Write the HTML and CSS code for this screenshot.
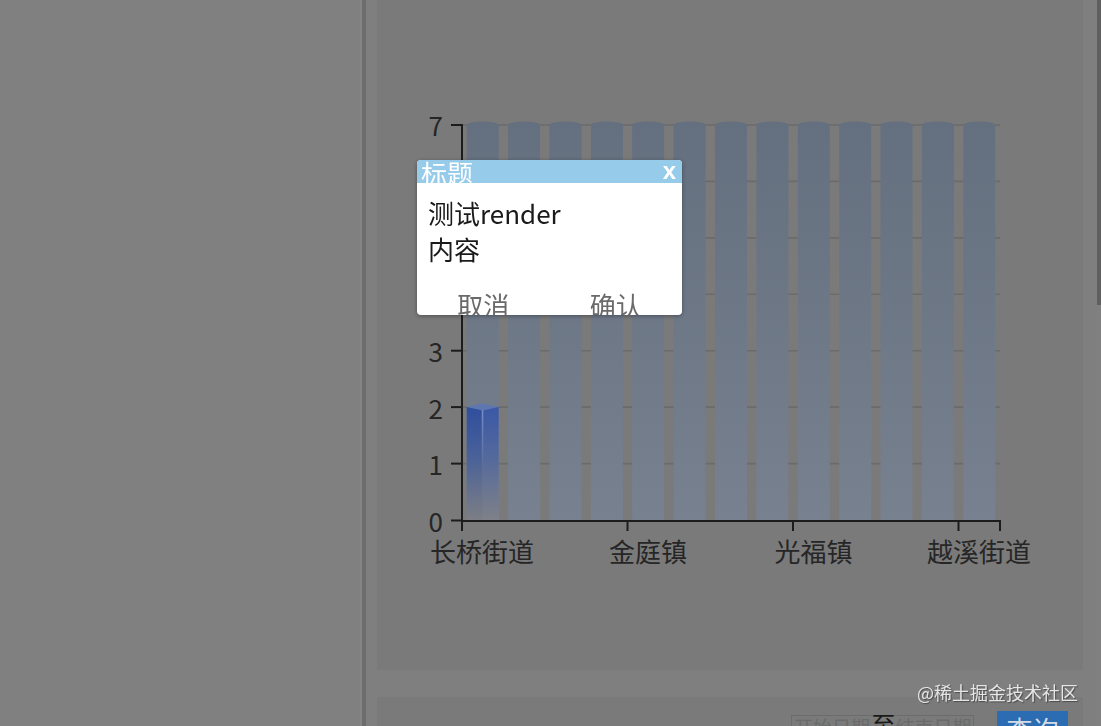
FILE: index.html
```html
<!DOCTYPE html>
<html lang="zh-CN">
<head>
<meta charset="utf-8">
<title>统计</title>
<link rel="stylesheet" href="styles.css">
</head>
<body>
<div class="app">
  <aside class="sidebar"></aside>
  <main class="main">
    <div class="main-content">
      <section class="card chart-card">
        <svg class="chart" width="706" height="670" viewBox="377 0 706 670" xmlns="http://www.w3.org/2000/svg">
          <defs>
            <linearGradient id="bgbar" x1="0" y1="121" x2="0" y2="520" gradientUnits="userSpaceOnUse">
              <stop offset="0" stop-color="#646f7f"/>
              <stop offset="1" stop-color="#77818f"/>
            </linearGradient>
            <linearGradient id="dataL" x1="0" y1="407" x2="0" y2="520" gradientUnits="userSpaceOnUse">
              <stop offset="0" stop-color="#2f4e9d"/>
              <stop offset="0.45" stop-color="#4a6299"/>
              <stop offset="1" stop-color="#7c7e84"/>
            </linearGradient>
            <linearGradient id="dataR" x1="0" y1="407" x2="0" y2="520" gradientUnits="userSpaceOnUse">
              <stop offset="0" stop-color="#3a58a6"/>
              <stop offset="0.45" stop-color="#54699c"/>
              <stop offset="1" stop-color="#7f8188"/>
            </linearGradient>
            <linearGradient id="shine" x1="0" y1="410" x2="0" y2="470" gradientUnits="userSpaceOnUse">
              <stop offset="0" stop-color="#8ea3d6" stop-opacity="0.7"/>
              <stop offset="1" stop-color="#8ea3d6" stop-opacity="0"/>
            </linearGradient>
          </defs>

          <g class="grid">
            <line x1="462" y1="463.6" x2="1000" y2="463.6"/>
            <line x1="462" y1="407.1" x2="1000" y2="407.1"/>
            <line x1="462" y1="350.7" x2="1000" y2="350.7"/>
            <line x1="462" y1="294.3" x2="1000" y2="294.3"/>
            <line x1="462" y1="237.9" x2="1000" y2="237.9"/>
            <line x1="462" y1="181.4" x2="1000" y2="181.4"/>
            <line x1="462" y1="125" x2="1000" y2="125"/>
          </g>

          <g class="bg-bars" fill="url(#bgbar)">
            <rect x="466.7" y="125" width="32" height="395"/><ellipse cx="482.7" cy="125" rx="16" ry="3.5"/>
            <rect x="508.1" y="125" width="32" height="395"/><ellipse cx="524.1" cy="125" rx="16" ry="3.5"/>
            <rect x="549.5" y="125" width="32" height="395"/><ellipse cx="565.5" cy="125" rx="16" ry="3.5"/>
            <rect x="590.9" y="125" width="32" height="395"/><ellipse cx="606.9" cy="125" rx="16" ry="3.5"/>
            <rect x="632.2" y="125" width="32" height="395"/><ellipse cx="648.2" cy="125" rx="16" ry="3.5"/>
            <rect x="673.6" y="125" width="32" height="395"/><ellipse cx="689.6" cy="125" rx="16" ry="3.5"/>
            <rect x="715" y="125" width="32" height="395"/><ellipse cx="731" cy="125" rx="16" ry="3.5"/>
            <rect x="756.4" y="125" width="32" height="395"/><ellipse cx="772.4" cy="125" rx="16" ry="3.5"/>
            <rect x="797.8" y="125" width="32" height="395"/><ellipse cx="813.8" cy="125" rx="16" ry="3.5"/>
            <rect x="839.2" y="125" width="32" height="395"/><ellipse cx="855.2" cy="125" rx="16" ry="3.5"/>
            <rect x="880.5" y="125" width="32" height="395"/><ellipse cx="896.5" cy="125" rx="16" ry="3.5"/>
            <rect x="921.9" y="125" width="32" height="395"/><ellipse cx="937.9" cy="125" rx="16" ry="3.5"/>
            <rect x="963.3" y="125" width="32" height="395"/><ellipse cx="979.3" cy="125" rx="16" ry="3.5"/>
          </g>

          <g class="data-bar">
            <rect x="466.7" y="407" width="16" height="113" fill="url(#dataL)"/>
            <rect x="482.7" y="407" width="16" height="113" fill="url(#dataR)"/>
            <polygon points="466.7,407 482.7,403.5 498.7,407 482.7,410.5" fill="#5f77b1"/>
            <rect x="481.7" y="410" width="1.6" height="60" fill="url(#shine)"/>
          </g>

          <g class="axis">
            <line x1="462" y1="124" x2="462" y2="531"/>
            <line x1="461" y1="521" x2="1001" y2="521"/>
            <line x1="451" y1="125" x2="462" y2="125"/>
            <line x1="451" y1="181.4" x2="462" y2="181.4"/>
            <line x1="451" y1="237.9" x2="462" y2="237.9"/>
            <line x1="451" y1="294.3" x2="462" y2="294.3"/>
            <line x1="451" y1="350.7" x2="462" y2="350.7"/>
            <line x1="451" y1="407.1" x2="462" y2="407.1"/>
            <line x1="451" y1="463.6" x2="462" y2="463.6"/>
            <line x1="451" y1="520.5" x2="462" y2="520.5"/>
            <line x1="627.5" y1="521" x2="627.5" y2="531"/>
            <line x1="793" y1="521" x2="793" y2="531"/>
            <line x1="958.5" y1="521" x2="958.5" y2="531"/>
            <line x1="1000" y1="521" x2="1000" y2="531"/>
          </g>

          <g class="y-labels">
            <text x="443" y="520">0</text>
            <text x="443" y="463.6">1</text>
            <text x="443" y="407.1">2</text>
            <text x="443" y="350.7">3</text>
            <text x="443" y="294.3">4</text>
            <text x="443" y="237.9">5</text>
            <text x="443" y="181.4">6</text>
            <text x="443" y="124">7</text>
          </g>
          <g class="x-labels">
            <text x="482" y="550">长桥街道</text>
            <text x="648" y="550">金庭镇</text>
            <text x="813.5" y="550">光福镇</text>
            <text x="979" y="550">越溪街道</text>
          </g>
        </svg>
      </section>

      <section class="card query-card">
        <div class="range">
          <span class="range-ph">开始日期</span>
          <span class="range-sep">至</span>
          <span class="range-ph">结束日期</span>
        </div>
        <button class="btn-query" type="button">查询</button>
      </section>

      <section class="card list-card"></section>
    </div>
    <div class="scrollbar"><div class="scrollbar-thumb"></div></div>
  </main>
</div>

<div class="modal">
  <div class="modal-header">
    <span class="modal-title">标题</span>
    <span class="modal-close">x</span>
  </div>
  <div class="modal-body">
    <div>测试render</div>
    <div>内容</div>
  </div>
  <div class="modal-footer">
    <button class="modal-btn" type="button">取消</button>
    <button class="modal-btn" type="button">确认</button>
  </div>
</div>

<div class="watermark">@稀土掘金技术社区</div>
</body>
</html>
```

FILE: styles.css
```css
html, body {
  margin: 0;
  padding: 0;
  width: 1101px;
  height: 726px;
  overflow: hidden;
  background: #808080;
  font-family: "Noto Sans CJK SC", "Noto Sans", sans-serif;
}

.app {
  display: flex;
  height: 726px;
}

.sidebar {
  width: 360px;
  flex: none;
  background: #808080;
  border-right: 2px solid #858585;
}

.main {
  flex: 1;
  min-width: 0;
  height: 726px;
  overflow: hidden;
  display: flex;
  background: #7f7f7f;
  border-left: 4px solid #6d6d6d;
}

.main-content {
  flex: 1;
  min-width: 0;
  padding: 0 14px 0 11px;
}

.scrollbar {
  width: 4px;
  flex: none;
  background: #808080;
}

.scrollbar-thumb {
  height: 305px;
  background: #5f5f5f;
}

.card {
  background: #7a7a7a;
}

.chart-card {
  height: 670px;
}

.chart {
  display: block;
}

.grid line {
  stroke: #6b6b6b;
  stroke-width: 1.6;
}

.axis line {
  stroke: #1c1c1c;
  stroke-width: 2;
}

.y-labels text {
  font-family: "Noto Sans CJK SC", "Noto Sans", sans-serif;
  font-size: 26px;
  fill: #262626;
  text-anchor: end;
  dominant-baseline: central;
}

.x-labels text {
  font-family: "Noto Sans CJK SC", "Noto Sans", sans-serif;
  font-size: 26px;
  fill: #262626;
  text-anchor: middle;
  dominant-baseline: central;
}

.query-card {
  margin-top: 27px;
  height: 60px;
  display: flex;
  justify-content: flex-end;
  align-items: flex-start;
  gap: 23px;
  padding: 14px 15px 0 0;
  box-sizing: border-box;
}

.range {
  width: 183px;
  height: 36px;
  box-sizing: border-box;
  border: 1px solid #6c6c6c;
  margin-top: 4px;
  display: flex;
  align-items: flex-start;
  padding-left: 2px;
  line-height: 1;
}

.range-ph {
  font-size: 19px;
  color: #6a6a6a;
  width: 82px;
  margin-top: 1px;
}

.range-sep {
  font-size: 24px;
  color: #1a1a1a;
  margin-top: -4px;
  width: 24px;
}

.btn-query {
  width: 71px;
  height: 36px;
  border: none;
  background: #2b6cb3;
  color: #d3dbe4;
  font-family: "Noto Sans CJK SC", "Noto Sans", sans-serif;
  font-size: 26px;
  line-height: 36px;
  padding: 0;
}

.list-card {
  margin-top: 27px;
  height: 944px;
}

.modal {
  position: fixed;
  left: 417px;
  top: 160px;
  width: 265px;
  height: 155px;
  background: #ffffff;
  border-radius: 4px;
  overflow: hidden;
  box-shadow: 0 1px 4px rgba(0, 0, 0, 0.35);
}

.modal-header {
  height: 23px;
  background: #96cbea;
  color: #ffffff;
  display: flex;
  justify-content: space-between;
  align-items: flex-start;
  padding: 0 6px 0 4px;
  overflow: hidden;
}

.modal-title {
  font-size: 26px;
  line-height: 26px;
}

.modal-close {
  font-family: "Liberation Sans", Arial, sans-serif;
  font-weight: bold;
  font-size: 24px;
  line-height: 24px;
  margin-top: -1px;
}

.modal-body {
  padding: 12px 11px 0;
  font-size: 26px;
  line-height: 36px;
  color: #1a1a1a;
}

.modal-footer {
  display: flex;
  margin-top: 20px;
}

.modal-btn {
  flex: 1;
  border: none;
  background: none;
  padding: 0;
  font-family: "Noto Sans CJK SC", "Noto Sans", sans-serif;
  font-size: 26px;
  line-height: 36px;
  color: #6a6a6a;
  text-align: center;
}

.watermark {
  position: fixed;
  right: 23px;
  bottom: 24px;
  font-size: 18px;
  line-height: 20px;
  color: #e6e6e6;
  text-shadow: 1px 1px 1px #4a4a4a;
  pointer-events: none;
}
```
